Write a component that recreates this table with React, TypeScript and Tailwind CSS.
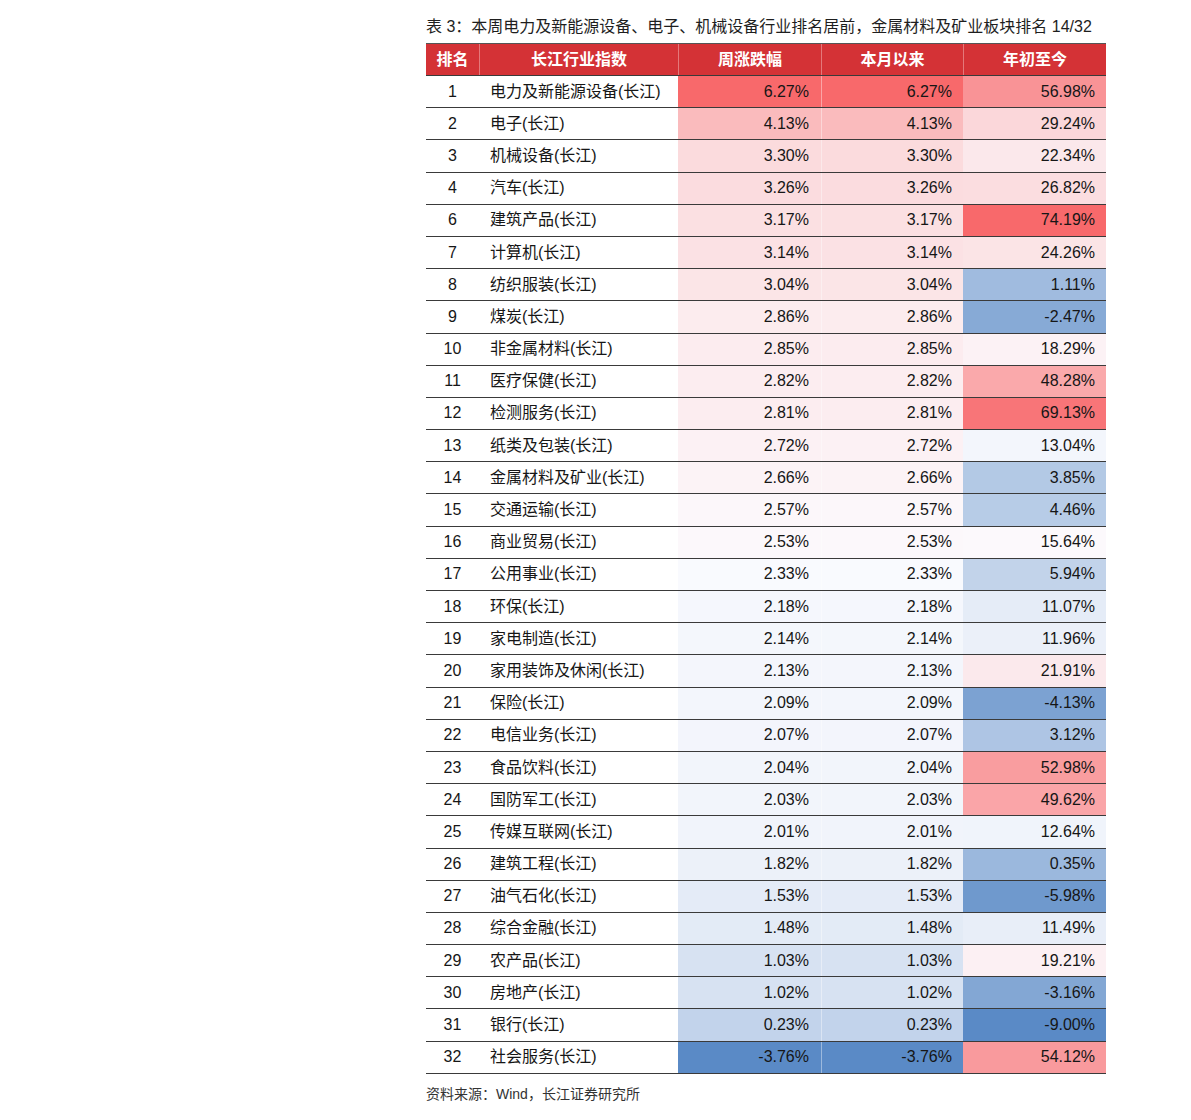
import React from "react";

type Row = [number, string, number, number, number];

const rows: Row[] = [
  [1, "电力及新能源设备(长江)", 6.27, 6.27, 56.98],
  [2, "电子(长江)", 4.13, 4.13, 29.24],
  [3, "机械设备(长江)", 3.3, 3.3, 22.34],
  [4, "汽车(长江)", 3.26, 3.26, 26.82],
  [6, "建筑产品(长江)", 3.17, 3.17, 74.19],
  [7, "计算机(长江)", 3.14, 3.14, 24.26],
  [8, "纺织服装(长江)", 3.04, 3.04, 1.11],
  [9, "煤炭(长江)", 2.86, 2.86, -2.47],
  [10, "非金属材料(长江)", 2.85, 2.85, 18.29],
  [11, "医疗保健(长江)", 2.82, 2.82, 48.28],
  [12, "检测服务(长江)", 2.81, 2.81, 69.13],
  [13, "纸类及包装(长江)", 2.72, 2.72, 13.04],
  [14, "金属材料及矿业(长江)", 2.66, 2.66, 3.85],
  [15, "交通运输(长江)", 2.57, 2.57, 4.46],
  [16, "商业贸易(长江)", 2.53, 2.53, 15.64],
  [17, "公用事业(长江)", 2.33, 2.33, 5.94],
  [18, "环保(长江)", 2.18, 2.18, 11.07],
  [19, "家电制造(长江)", 2.14, 2.14, 11.96],
  [20, "家用装饰及休闲(长江)", 2.13, 2.13, 21.91],
  [21, "保险(长江)", 2.09, 2.09, -4.13],
  [22, "电信业务(长江)", 2.07, 2.07, 3.12],
  [23, "食品饮料(长江)", 2.04, 2.04, 52.98],
  [24, "国防军工(长江)", 2.03, 2.03, 49.62],
  [25, "传媒互联网(长江)", 2.01, 2.01, 12.64],
  [26, "建筑工程(长江)", 1.82, 1.82, 0.35],
  [27, "油气石化(长江)", 1.53, 1.53, -5.98],
  [28, "综合金融(长江)", 1.48, 1.48, 11.49],
  [29, "农产品(长江)", 1.03, 1.03, 19.21],
  [30, "房地产(长江)", 1.02, 1.02, -3.16],
  [31, "银行(长江)", 0.23, 0.23, -9.0],
  [32, "社会服务(长江)", -3.76, -3.76, 54.12],
];

const RED = [248, 105, 107];
const MID = [252, 252, 255];
const BLUE = [90, 138, 198];

function scale(v: number, min: number, mid: number, max: number): string {
  let from: number[], to: number[], t: number;
  if (v >= mid) {
    from = MID;
    to = RED;
    t = (v - mid) / (max - mid);
  } else {
    from = MID;
    to = BLUE;
    t = (mid - v) / (mid - min);
  }
  t = Math.max(0, Math.min(1, t));
  const c = from.map((f, i) => Math.round(f + (to[i] - f) * t));
  return `rgb(${c[0]},${c[1]},${c[2]})`;
}

const fmt = (v: number) => `${v.toFixed(2)}%`;

export default function App() {
  return (
    <div
      className="w-[1191px] h-[1120px] bg-white text-[#161616]"
      style={{ fontFamily: '"Liberation Sans", "Noto Sans CJK SC", sans-serif' }}
    >
      <div className="pl-[426px] pt-[16px]">
        <div className="text-[16px] leading-[22px] text-[#1e1e1e] whitespace-nowrap">
          表 3：本周电力及新能源设备、电子、机械设备行业排名居前，金属材料及矿业板块排名 14/32
        </div>
        <div className="mt-[5px] w-[680px] border-t border-[#555]">
          <div className="flex h-[31px] bg-[#d43236] text-white font-bold text-[16px] items-stretch">
            <div className="w-[53px] flex items-center justify-center">排名</div>
            <div className="w-[199px] flex items-center justify-center border-l border-[#e4787a]">长江行业指数</div>
            <div className="w-[143px] flex items-center justify-center border-l border-[#e4787a]">周涨跌幅</div>
            <div className="w-[142px] flex items-center justify-center border-l border-[#e4787a]">本月以来</div>
            <div className="w-[143px] flex items-center justify-center border-l border-[#e4787a]">年初至今</div>
          </div>
          {rows.map((r) => (
            <div key={r[0]} className="flex h-[32.2px] border-t border-[#3a3a3a] text-[16px] items-stretch">
              <div className="w-[53px] flex items-center justify-center">{r[0]}</div>
              <div className="w-[199px] flex items-center pl-[11px] whitespace-nowrap">{r[1]}</div>
              <div
                className="w-[143px] flex items-center justify-end pr-[12px]"
                style={{ backgroundColor: scale(r[2], -3.76, 2.43, 6.27) }}
              >
                {fmt(r[2])}
              </div>
              <div
                className="w-[142px] flex items-center justify-end pr-[11px] border-l border-white/40"
                style={{ backgroundColor: scale(r[3], -3.76, 2.43, 6.27) }}
              >
                {fmt(r[3])}
              </div>
              <div
                className="w-[143px] flex items-center justify-end pr-[11px]"
                style={{ backgroundColor: scale(r[4], -9.0, 14.34, 74.19) }}
              >
                {fmt(r[4])}
              </div>
            </div>
          ))}
          <div className="border-t border-[#3a3a3a]" />
        </div>
        <div className="mt-[10px] text-[14px] leading-[20px] text-[#333]">资料来源：Wind，长江证券研究所</div>
      </div>
    </div>
  );
}
